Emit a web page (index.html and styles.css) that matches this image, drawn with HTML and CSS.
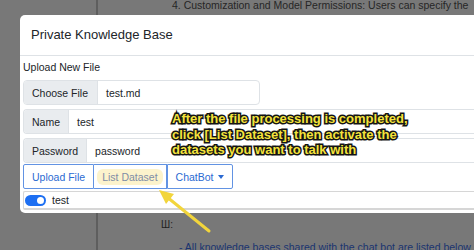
FILE: index.html
```html
<!DOCTYPE html>
<html>
<head>
<meta charset="utf-8">
<link rel="stylesheet" href="styles.css">
</head>
<body>
<div class="page">
  <aside class="sidebar"></aside>
  <main class="main">
    <p class="doc-line indent">4. Customization and Model Permissions: Users can specify the</p>
    <div class="hidden-area"></div>
    <p class="doc-line code">Ш:</p>
    <p class="doc-line link">- All knowledge bases shared with the chat bot are listed below</p>
  </main>
</div>

<div class="modal">
  <div class="modal-header">
    <h5 class="modal-title">Private Knowledge Base</h5>
  </div>
  <div class="modal-body">
    <div class="label">Upload New File</div>
    <div class="input-group short">
      <span class="addon file-btn">Choose File</span>
      <span class="field">test.md</span>
    </div>
    <div class="input-group">
      <span class="addon">Name</span>
      <span class="field">test</span>
    </div>
    <div class="input-group">
      <span class="addon">Password</span>
      <span class="field">password</span>
    </div>
    <div class="btn-group">
      <button class="btn">Upload File</button>
      <button class="btn btn-list"><span class="hl">List Dataset</span></button>
      <button class="btn">ChatBot<span class="caret"></span></button>
    </div>
    <div class="dataset-list">
      <span class="switch"><span class="knob"></span></span>
      <span class="ds-name">test</span>
    </div>
  </div>
</div>

<div class="note">After the file processing is completed,<br>click [List Dataset], then activate the<br>datasets you want to talk with</div>

<svg class="arrow" width="474" height="250" viewBox="0 0 474 250">
  <line x1="209" y1="231" x2="167" y2="197" stroke="#f2d53c" stroke-width="3" stroke-linecap="round"/>
  <polygon points="159,190 174,194 166,204" fill="#f2d53c"/>
</svg>
</body>
</html>
```

FILE: styles.css
```css
html, body {
  margin: 0;
  padding: 0;
}
body {
  width: 474px;
  height: 250px;
  overflow: hidden;
  position: relative;
  background: #787878;
  font-family: "Liberation Sans", Arial, sans-serif;
  font-size: 10.5px;
  color: #212529;
}
.page {
  display: flex;
  height: 250px;
}
.sidebar {
  width: 96px;
  border-right: 2px solid #5e5e5e;
  flex: none;
}
.main {
  flex: 1;
  padding-left: 63px;
  display: flex;
  flex-direction: column;
  min-width: 0;
}
.doc-line {
  margin: 0;
  line-height: 15px;
  white-space: nowrap;
  color: #262626;
}
.indent {
  margin-top: -2px;
  padding-left: 11px;
}
.hidden-area {
  height: 204px;
  flex: none;
}
.code {
  font-size: 10px;
  color: #1e1e1e;
}
.link {
  margin-top: 8px;
  padding-left: 18px;
  color: #1a3470;
}

.modal {
  position: absolute;
  left: 20px;
  top: 15px;
  width: 480px;
  background: #fff;
  border-radius: 5px;
}
.modal-header {
  padding: 10px 11px;
  border-bottom: 1px solid #dee2e6;
}
.modal-title {
  margin: 0;
  font-size: 13px;
  font-weight: 400;
  line-height: 20px;
  color: #212529;
}
.modal-body {
  padding: 3px 0 3px 3px;
  display: flex;
  flex-direction: column;
}
.label {
  line-height: 16px;
  margin-bottom: 5px;
}
.input-group {
  display: flex;
  height: 25px;
  box-sizing: border-box;
  border: 1px solid #dee2e6;
  border-right: none;
  border-radius: 4px 0 0 4px;
  margin-bottom: 3px;
}
.input-group + .input-group {
  margin-top: 1px;
}
.input-group.short {
  width: 237px;
  border-right: 1px solid #dee2e6;
  border-radius: 4px;
}
.addon {
  display: flex;
  align-items: center;
  padding: 0 8px 0 8px;
  background: #e9ecef;
  border-right: 1px solid #dee2e6;
  border-radius: 3px 0 0 3px;
  color: #212529;
}
.file-btn {
  padding: 0 9px 0 8px;
}
.field {
  display: flex;
  align-items: center;
  padding: 0 8px;
  color: #212529;
}
.btn-group {
  display: flex;
  height: 25px;
  margin-top: -2px;
}
.btn {
  display: flex;
  align-items: center;
  font: inherit;
  background: #fff;
  color: #2b6ad2;
  border: 1px solid #6293e3;
  padding: 0 8px;
  margin: 0;
}
.btn + .btn {
  border-left: none;
}
.btn:first-child {
  border-radius: 2px 0 0 2px;
  border-right: 1px solid #6293e3;
}
.btn:last-child {
  border-radius: 0 2px 2px 0;
  border-left: 1px solid #6293e3;
}
.btn-list {
  padding: 0 3px;
}
.hl {
  background: #fcf3cc;
  color: #7f8da6;
  border-radius: 6px;
  padding: 2px 5px;
}
.caret {
  display: inline-block;
  margin-left: 4px;
  border-top: 4px solid #2b6ad2;
  border-left: 3.5px solid transparent;
  border-right: 3.5px solid transparent;
}
.dataset-list {
  display: flex;
  align-items: center;
  gap: 6px;
  height: 19px;
  box-sizing: border-box;
  margin-top: 2px;
  padding-left: 1px;
  border: 1px solid #d6d6d6;
  border-bottom-width: 2px;
  border-right: none;
  border-radius: 2px 0 0 2px;
}
.switch {
  display: flex;
  align-items: center;
  justify-content: flex-end;
  width: 21px;
  height: 11px;
  box-sizing: border-box;
  padding-right: 2px;
  border-radius: 6px;
  background: #1d6ff2;
}
.knob {
  width: 7px;
  height: 7px;
  border-radius: 50%;
  background: #fff;
}
.ds-name {
  color: #212529;
}

.note {
  position: absolute;
  left: 172px;
  top: 111px;
  font-family: "Liberation Sans", Arial, sans-serif;
  font-weight: 700;
  font-size: 13px;
  line-height: 15.5px;
  white-space: nowrap;
  color: #f4e33c;
  -webkit-text-stroke: 3px #141414;
  paint-order: stroke fill;
}
.arrow {
  position: absolute;
  left: 0;
  top: 0;
}
```
